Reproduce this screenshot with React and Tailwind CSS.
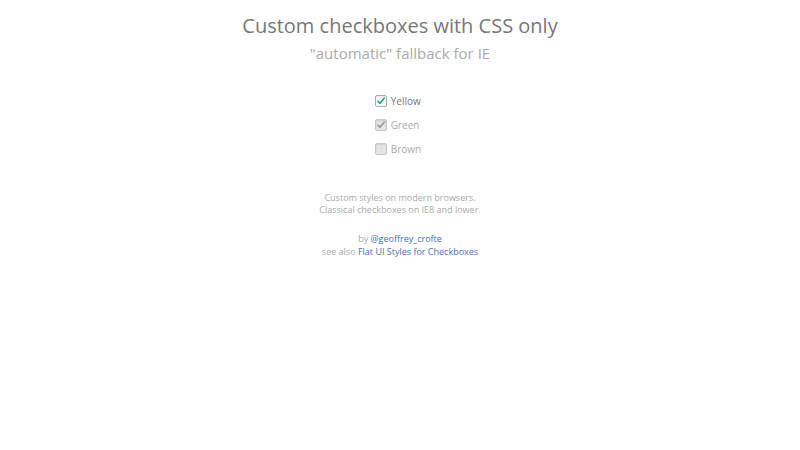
import React from "react";

function Box({ checked, disabled }) {
  return (
    <span
      className={`relative inline-block w-[12px] h-[12px] rounded-[2px] border ${
        disabled ? "border-[#c8c8c8] bg-[#e6e6e6]" : "border-[#aaa] bg-white"
      } shadow-[inset_0_1px_2px_rgba(0,0,0,0.1)]`}
    >
      {checked && (
        <svg viewBox="0 0 12 12" className="absolute left-[0px] top-[0px] w-[10px] h-[10px]">
          <path
            d="M2.5 6.3 L4.8 8.8 L9.8 2.6"
            fill="none"
            stroke={disabled ? "#999" : "#09ad7e"}
            strokeWidth="2"
            strokeLinecap="round"
            strokeLinejoin="round"
          />
        </svg>
      )}
    </span>
  );
}

function Row({ label, checked, disabled }) {
  return (
    <label className="flex items-center h-[24px] gap-[4px]">
      <Box checked={checked} disabled={disabled} />
      <span className={disabled ? "text-[#aaa]" : "text-[#777]"}>{label}</span>
    </label>
  );
}

export default function App() {
  return (
    <div
      className="w-[800px] h-[450px] bg-white text-center"
      style={{ fontFamily: '"Open Sans", sans-serif' }}
    >
      <h1 className="pt-[11px] text-[20px] leading-[30px] text-[#777] font-normal">
        Custom checkboxes with CSS only
      </h1>
      <h2 className="text-[15px] leading-[24px] text-[#aaa] font-normal">
        "automatic" fallback for IE
      </h2>
      <form className="mt-[24px] mr-[4px] inline-block text-left text-[10px]">
        <Row label="Yellow" checked />
        <Row label="Green" checked disabled />
        <Row label="Brown" disabled />
      </form>
      <p className="mt-[31px] text-[9px] leading-[12px] text-[#aaa]">
        Custom styles on modern browsers.
        <br />
        Classical checkboxes on IE8 and lower.
      </p>
      <p className="mt-[16px] text-[9px] leading-[13px] text-[#aaa]">
        by <a className="text-[#4470b5]">@geoffrey_crofte</a>
        <br />
        see also <a className="text-[#4470b5]">Flat UI Styles for Checkboxes</a>
      </p>
    </div>
  );
}
